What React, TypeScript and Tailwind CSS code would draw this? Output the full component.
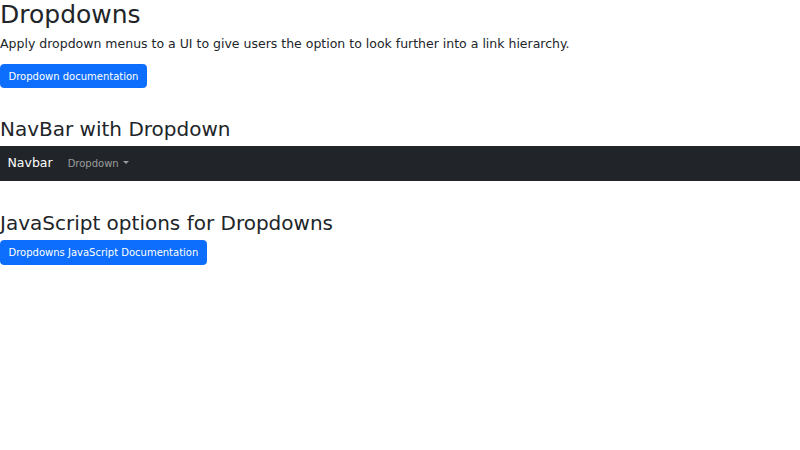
import React from "react";

export default function App() {
  return (
    <div className="min-h-[450px] w-[800px] bg-white font-['DejaVu_Sans','Liberation_Sans',sans-serif] text-[#212529] text-[10px] leading-[1.5]">
      <h1 className="text-[25px] leading-[1.2] font-normal mb-[5px]">Dropdowns</h1>
      <p className="text-[12.5px] leading-[1.5] font-normal mb-[10px]">
        Apply dropdown menus to a UI to give users the option to look further into a link hierarchy.
      </p>
      <button className="bg-[#0d6efd] text-white text-[10px] leading-[15px] px-[7.5px] py-[3.75px] border border-[#0d6efd] rounded-[3.75px]">
        Dropdown documentation
      </button>

      <h2 className="text-[20px] leading-[1.2] font-normal mt-[28.75px] mb-[5px]">NavBar with Dropdown</h2>
      <nav className="bg-[#212529] py-[5px]">
        <div className="flex items-center px-[7.5px]">
          <span className="text-white text-[12.5px] leading-[18.75px] py-[3.125px] mr-[10px]">Navbar</span>
          <span className="text-[rgba(255,255,255,0.55)] text-[10px] leading-[15px] p-[5px] flex items-center">
            Dropdown
            <span className="inline-block ml-[4px] w-0 h-0 border-t-[3px] border-t-[rgba(255,255,255,0.55)] border-x-[3px] border-x-transparent border-b-0 relative top-[-1px]"></span>
          </span>
        </div>
      </nav>

      <h2 className="text-[20px] leading-[1.2] font-normal mt-[30px] mb-[5px]">JavaScript options for Dropdowns</h2>
      <button className="bg-[#0d6efd] text-white text-[10px] leading-[15px] px-[7.5px] py-[3.75px] border border-[#0d6efd] rounded-[3.75px]">
        Dropdowns JavaScript Documentation
      </button>
    </div>
  );
}
